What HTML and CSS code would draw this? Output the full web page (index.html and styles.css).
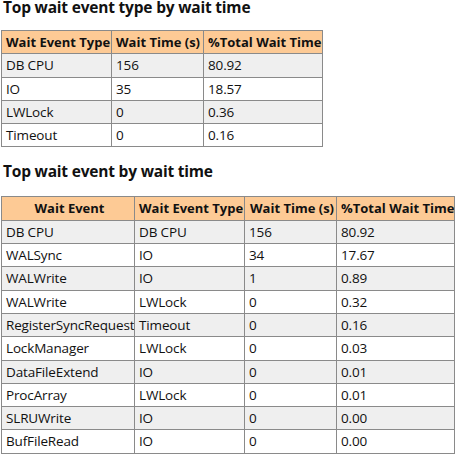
FILE: index.html
```html
<!DOCTYPE html>
<html lang="en">
<head>
    <meta charset="UTF-8">
    <meta name="viewport" content="width=device-width, initial-scale=1.0">
    <title>Wait Events</title>
    <link rel="stylesheet" href="styles.css">
</head>
<body>

    <h3 class="section-title first">Top wait event type by wait time</h3>
    <table class="report types">
        <colgroup>
            <col class="c-type">
            <col class="c-time">
            <col class="c-pct">
        </colgroup>
        <tr class="heading">
            <th>Wait Event Type</th>
            <th>Wait Time (s)</th>
            <th>%Total Wait Time</th>
        </tr>
        <tr><td>DB CPU</td><td>156</td><td>80.92</td></tr>
        <tr><td>IO</td><td>35</td><td>18.57</td></tr>
        <tr><td>LWLock</td><td>0</td><td>0.36</td></tr>
        <tr><td>Timeout</td><td>0</td><td>0.16</td></tr>
    </table>

    <h3 class="section-title">Top wait event by wait time</h3>
    <table class="report events">
        <colgroup>
            <col class="c-event">
            <col class="c-type">
            <col class="c-time">
            <col class="c-pct">
        </colgroup>
        <tr class="heading">
            <th>Wait Event</th>
            <th>Wait Event Type</th>
            <th>Wait Time (s)</th>
            <th>%Total Wait Time</th>
        </tr>
        <tr><td>DB CPU</td><td>DB CPU</td><td>156</td><td>80.92</td></tr>
        <tr><td>WALSync</td><td>IO</td><td>34</td><td>17.67</td></tr>
        <tr><td>WALWrite</td><td>IO</td><td>1</td><td>0.89</td></tr>
        <tr><td>WALWrite</td><td>LWLock</td><td>0</td><td>0.32</td></tr>
        <tr><td>RegisterSyncRequest</td><td>Timeout</td><td>0</td><td>0.16</td></tr>
        <tr><td>LockManager</td><td>LWLock</td><td>0</td><td>0.03</td></tr>
        <tr><td>DataFileExtend</td><td>IO</td><td>0</td><td>0.01</td></tr>
        <tr><td>ProcArray</td><td>LWLock</td><td>0</td><td>0.01</td></tr>
        <tr><td>SLRUWrite</td><td>IO</td><td>0</td><td>0.00</td></tr>
        <tr><td>BufFileRead</td><td>IO</td><td>0</td><td>0.00</td></tr>
    </table>

</body>
</html>
```

FILE: styles.css
```css
body {
    font-family: 'Open Sans', 'Noto Sans', sans-serif;
    font-size: 13.5px;
    color: #111;
    background-color: #fff;
    margin: 0 0 0 1px;
}
.section-title {
    font-size: 15.5px;
    font-weight: bold;
    letter-spacing: -0.2px;
    line-height: 22px;
    margin: 13px 0 14px 2px;
}
.section-title.first {
    margin-top: -4px;
    margin-bottom: 12px;
}
.report {
    border-collapse: collapse;
    table-layout: fixed;
}
.report.types {
    width: 322px;
}
.report.events {
    width: 454px;
}
.report col.c-event { width: 133px; }
.report col.c-type { width: 110px; }
.report col.c-time { width: 92px; }
.report col.c-pct { width: 118px; }
.report.types col.c-pct { width: 119px; }
.report th,
.report td {
    border: 1px solid #8a8a8a;
    padding: 2px 1px 2px 4px;
    line-height: 18.3px;
    text-align: left;
    white-space: nowrap;
    overflow: hidden;
}
.report td {
    letter-spacing: -0.15px;
}
.report tr.heading th {
    background-color: #fdca95;
    font-weight: bold;
    font-size: 13px;
}
.report.events tr.heading th {
    text-align: center;
}
.report tr:nth-child(even) td {
    background-color: #efefef;
}
```
